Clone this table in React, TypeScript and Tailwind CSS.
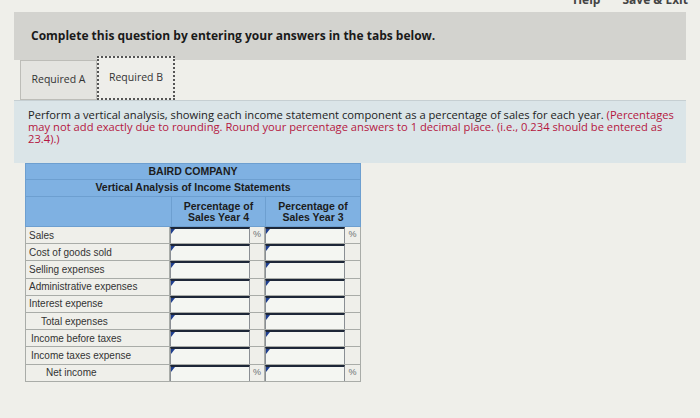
const rows = [
  { label: 'Sales', indent: 'pl-[3px]', pct: true },
  { label: 'Cost of goods sold', indent: 'pl-[3px]', pct: false },
  { label: 'Selling expenses', indent: 'pl-[3px]', pct: false },
  { label: 'Administrative expenses', indent: 'pl-[3px]', pct: false },
  { label: 'Interest expense', indent: 'pl-[3px]', pct: false },
  { label: 'Total expenses', indent: 'pl-[15px]', pct: false },
  { label: 'Income before taxes', indent: 'pl-[5px]', pct: false },
  { label: 'Income taxes expense', indent: 'pl-[5px]', pct: false },
  { label: 'Net income', indent: 'pl-[20px]', pct: true },
];

function InputCell() {
  return (
    <div className="relative w-[80px] h-full border-t-2 border-t-[#1d2738] border-x border-x-[#8a8f94] bg-[#f4f6f2]">
      <div className="absolute left-0 top-0 w-0 h-0 border-t-[5px] border-t-[#1f3f8f] border-r-[4px] border-r-transparent" />
    </div>
  );
}

function PctCell({ show, w }: { show: boolean; w: string }) {
  return (
    <div className={`${w} h-full border-r border-[#a9aca8] flex items-center justify-center text-[9px] text-[#6b6f73]`}>
      {show ? '%' : ''}
    </div>
  );
}

export default function App() {
  return (
    <div className="w-[700px] h-[418px] overflow-hidden bg-[#efefea] font-['Open_Sans',sans-serif] text-[#222]">
      {/* top links, cut off by the edge */}
      <div className="h-[12px] overflow-hidden flex justify-end gap-[22px] pr-[12px]">
        <span className="-mt-[9px] text-[12px] font-bold text-[#444]">Help</span>
        <span className="-mt-[9px] text-[12px] font-bold text-[#444]">Save &amp; Exit</span>
      </div>

      {/* banner */}
      <div className="mx-[14px] h-[48px] bg-[#d3d3cf] flex items-center pl-[17px]">
        <h1 className="text-[12px] font-bold text-[#1a1a1a]">
          Complete this question by entering your answers in the tabs below.
        </h1>
      </div>

      {/* tabs */}
      <div className="mx-[14px] h-[40px] flex items-end pl-[6px]">
        <div className="w-[77px] h-[40px] bg-[#e4e4e0] border border-[#bdbdb8] flex items-center justify-center text-[10.5px] text-[#333]">
          Required A
        </div>
        <div className="w-[78px] h-[44px] border-2 border-dotted border-[#555] bg-[#eeeeea] flex items-center justify-center text-[10.5px] text-[#333]">
          Required B
        </div>
      </div>

      {/* instructions */}
      <div className="mx-[14px] h-[63px] bg-[#dbe5e8] border-t border-[#c6cfd2] pl-[14px] pr-[10px] pt-[8px]">
        <p className="text-[11.2px] leading-[12px] text-[#222]">
          Perform a vertical analysis, showing each income statement component as a percentage of sales for each year.{' '}
          <span className="text-[#b5173f]">
            (Percentages may not add exactly due to rounding. Round your percentage answers to 1 decimal place. (i.e., 0.234 should be entered as 23.4).)
          </span>
        </p>
      </div>

      {/* table */}
      <div className="ml-[25px] w-[336px] font-['Liberation_Sans',Arial,sans-serif]">
        <div className="h-[17px] bg-[#7fb1e2] border border-[#6d9fd0] flex items-center justify-center text-[10.5px] font-bold text-[#1c1c1c]">
          BAIRD COMPANY
        </div>
        <div className="h-[17px] bg-[#7fb1e2] border-x border-b border-[#6d9fd0] flex items-center justify-center text-[10.5px] font-bold text-[#1c1c1c]">
          Vertical Analysis of Income Statements
        </div>
        <div className="h-[30px] bg-[#7fb1e2] border-x border-b border-[#6d9fd0] flex text-[10.5px] font-bold text-[#1c1c1c] leading-[11px]">
          <div className="w-[145px]" />
          <div className="w-[95px] border-x border-[#6d9fd0] flex items-center justify-center text-center">
            Percentage of
            <br />
            Sales Year 4
          </div>
          <div className="flex-1 flex items-center justify-center text-center">
            Percentage of
            <br />
            Sales Year 3
          </div>
        </div>
        {rows.map((r) => (
          <div key={r.label} className="h-[17.2px] flex border-b border-[#a9aca8]">
            <div className={`w-[145px] h-full border-x border-[#a9aca8] flex items-center ${r.indent} text-[10px] text-[#333]`}>
              {r.label}
            </div>
            <InputCell />
            <PctCell show={r.pct} w="w-[15px]" />
            <InputCell />
            <PctCell show={r.pct} w="w-[16px]" />
          </div>
        ))}
      </div>
    </div>
  );
}
